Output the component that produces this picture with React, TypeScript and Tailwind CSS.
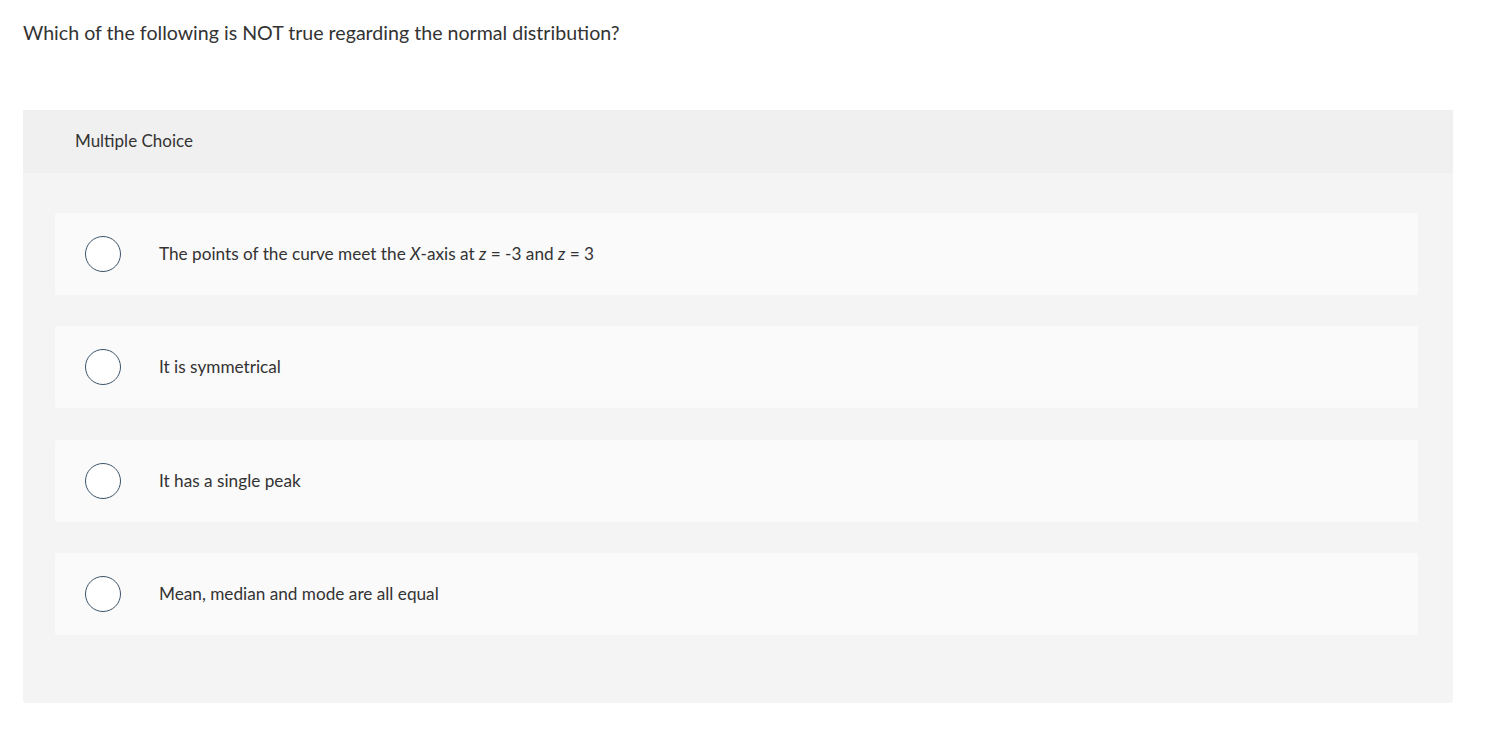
const options = [
  'first',
  'It is symmetrical',
  'It has a single peak',
  'Mean, median and mode are all equal',
]

function Radio() {
  return <span className="block h-[36px] w-[36px] shrink-0 rounded-full border-[1.5px] border-[#3d5468] bg-white" />
}

export default function App() {
  return (
    <div className="min-h-[732px] bg-white px-[23px] pt-[22px] font-['Lato','Open_Sans',sans-serif] text-[#333]">
      <p className="text-[19.6px] leading-[22px]">Which of the following is NOT true regarding the normal distribution?</p>
      <div className="mt-[66px] w-[1430px] rounded-[3px] bg-[#f4f4f4] pb-[68px]">
        <div className="flex h-[63px] items-center bg-[#f0f0f0] px-[52px] pb-[2px] text-[17px]">Multiple Choice</div>
        <div className="flex flex-col gap-[31.3px] px-[32px] pt-[40px] pr-[35px]">
          {options.map((opt) => (
            <div key={opt} className="flex h-[82px] items-center rounded-[2px] bg-[#fafafa] pl-[30px]">
              <Radio />
              <span className="ml-[38px] text-[17.2px] text-[#333]">
                {opt === 'first' ? (
                  <>
                    The points of the curve meet the <i>X</i>-axis at <i>z</i> = -3 and <i>z</i> = 3
                  </>
                ) : (
                  opt
                )}
              </span>
            </div>
          ))}
        </div>
      </div>
    </div>
  )
}
